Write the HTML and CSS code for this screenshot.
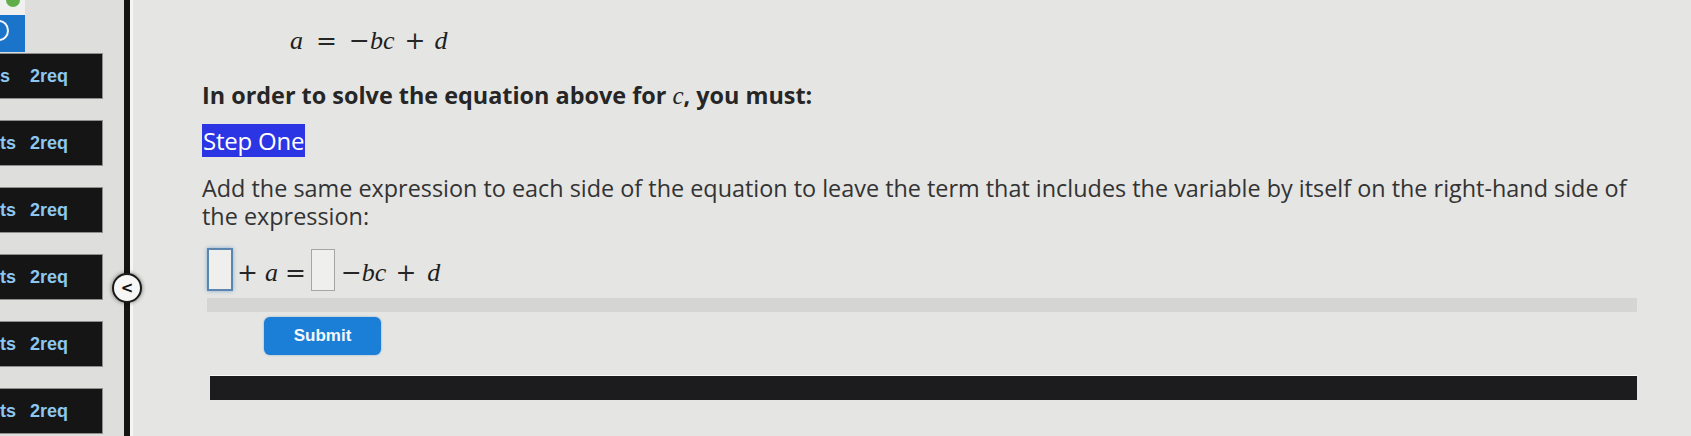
FILE: index.html
```html
<!DOCTYPE html>
<html>
<head>
<meta charset="utf-8">
<link rel="stylesheet" href="styles.css">
</head>
<body>
<div class="page">
  <aside class="sidebar">
    <div class="top-tab"><span class="tab-dot"></span><span class="tab-ring"></span></div>
    <div class="item"><span class="cut">s</span><span class="req">2req</span></div>
    <div class="item"><span class="cut">ts</span><span class="req">2req</span></div>
    <div class="item"><span class="cut">ts</span><span class="req">2req</span></div>
    <div class="item"><span class="cut">ts</span><span class="req">2req</span></div>
    <div class="item"><span class="cut">ts</span><span class="req">2req</span></div>
    <div class="item"><span class="cut">ts</span><span class="req">2req</span></div>
  </aside>
  <div class="divider">
    <button class="collapse" aria-label="collapse">&lt;</button>
  </div>
  <main class="main">
    <div class="display-eq">
      <span class="v va">a</span><span class="o rel">=</span><span class="o neg">−</span><span class="v">bc</span><span class="o bin">+</span><span class="v">d</span>
    </div>
    <p class="prompt">In order to solve the equation above for <span class="ic">c</span>, you must:</p>
    <div class="step"><span class="step-label">Step One</span></div>
    <p class="instr">Add the same expression to each side of the equation to leave the term that includes the variable by itself on the right-hand side of the expression:</p>
    <div class="answer-row">
      <span class="blank focused"></span><span class="o plus1">+</span><span class="v">a</span><span class="o rel2">=</span><span class="blank"></span><span class="o neg2">−</span><span class="v">bc</span><span class="o bin2">+</span><span class="v">d</span>
    </div>
    <div class="rule-gray"></div>
    <div class="actions"><button class="submit">Submit</button></div>
    <div class="rule-black"></div>
  </main>
</div>
</body>
</html>
```

FILE: styles.css
```css
html, body {
  margin: 0;
  padding: 0;
}
body {
  width: 1691px;
  height: 436px;
  overflow: hidden;
  background: #e5e5e3;
  font-family: "Open Sans", "Liberation Sans", sans-serif;
  color: #2b2b2b;
}
.page {
  display: flex;
  height: 436px;
}
.sidebar {
  width: 124px;
  flex: none;
  background: #dededc;
  display: flex;
  flex-direction: column;
  gap: 21px;
}
.top-tab {
  width: 25px;
  height: 52px;
  margin-bottom: -20px;
  background: linear-gradient(#f0f0ee 0 15px, #1a74c9 15px);
  position: relative;
  overflow: hidden;
}
.tab-dot {
  position: absolute;
  left: 6px;
  top: -7px;
  width: 14px;
  height: 14px;
  border-radius: 50%;
  background: #5fae4a;
}
.tab-ring {
  position: absolute;
  left: -11px;
  top: 20px;
  width: 16px;
  height: 17px;
  border: 2px solid #f4f4f4;
  border-radius: 50%;
}
.item {
  width: 103px;
  height: 46px;
  box-sizing: border-box;
  background: #161516;
  border: 1px solid #8e8e8e;
  border-left: none;
  color: #8dc7f0;
  font-family: "Liberation Sans", Arial, sans-serif;
  font-weight: bold;
  font-size: 18px;
  display: flex;
  align-items: center;
}
.cut {
  width: 30px;
  flex: none;
}
.divider {
  width: 6px;
  flex: none;
  background: #141414;
  border-right: 3px solid #f5f5f4;
  position: relative;
}
.collapse {
  position: absolute;
  left: -12px;
  top: 273px;
  width: 30px;
  height: 30px;
  box-sizing: border-box;
  border-radius: 50%;
  border: 2px solid #1a1a1a;
  background: #f6f6f6;
  color: #111;
  font-family: "DejaVu Sans", sans-serif;
  font-weight: bold;
  font-size: 15px;
  line-height: 24px;
  padding: 0;
  box-shadow: 0 0 4px rgba(0,0,0,0.55);
}
.main {
  flex: 1;
  padding: 26px 54px 0 69px;
  display: flex;
  flex-direction: column;
}
.display-eq, .answer-row {
  font-family: "Liberation Serif", "Times New Roman", serif;
  font-size: 26px;
  color: #1e1e1e;
  display: flex;
}
.display-eq {
  margin-left: 88px;
  height: 34px;
  align-items: baseline;
}
.display-eq span, .answer-row span.v, .answer-row span.o {
  line-height: 30px;
}
.v, .ic {
  font-style: italic;
}
.o {
  font-family: "DejaVu Serif", serif;
  font-size: 25px;
  font-style: normal;
  color: #262626;
}
.rel { margin: 0 12px 0 13px; }
.neg { margin-right: 0; }
.bin { margin: 0 9px 0 10px; }
.ic {
  font-family: "Liberation Serif", serif;
  font-size: 25px;
  font-weight: normal;
}
.prompt {
  margin: 21px 0 0;
  font-size: 23.4px;
  font-weight: 700;
  line-height: 28px;
  color: #262626;
}
.step {
  margin-top: 14px;
  height: 33px;
  display: flex;
}
.step-label {
  background: #2b35e4;
  color: #fff;
  font-size: 24px;
  line-height: 33px;
  padding: 0 1px;
  letter-spacing: -0.2px;
}
.instr {
  margin: 17px 0 0;
  font-size: 23.4px;
  line-height: 28px;
  color: #333;
}
.answer-row {
  margin-top: 15px;
  height: 46px;
  align-items: flex-end;
  margin-left: 5px;
}
.answer-row span.v, .answer-row span.o {
  padding-bottom: 3px;
}
.blank {
  width: 24px;
  height: 42px;
  box-sizing: border-box;
  border: 1px solid #a6a6a6;
  background: #efefed;
}
.blank.focused {
  width: 26px;
  height: 43px;
  border: 2px solid #5d86af;
  box-shadow: 0 0 4px #86abd3;
}
.plus1 { margin: 0 7px 0 4px; }
.rel2 { margin: 0 5px 0 7px; }
.neg2 { margin: 0 0 0 6px; }
.bin2 { margin: 0 11px 0 9px; }
.rule-gray {
  margin-top: 7px;
  margin-left: 5px;
  height: 14px;
  background: #d5d5d3;
}
.actions {
  margin-top: 5px;
  padding-left: 62px;
  display: flex;
}
.submit {
  width: 117px;
  height: 38px;
  border: none;
  border-radius: 6px;
  background: #1b7fd7;
  color: #f4f8fc;
  font-family: "Liberation Sans", Arial, sans-serif;
  font-weight: bold;
  font-size: 17px;
  box-shadow: 0 0 2px rgba(20,100,190,0.5);
}
.rule-black {
  margin-top: 20px;
  margin-left: 8px;
  height: 24px;
  background: #1c1c1e;
  border-top: 1px solid #fafafa;
}
```
